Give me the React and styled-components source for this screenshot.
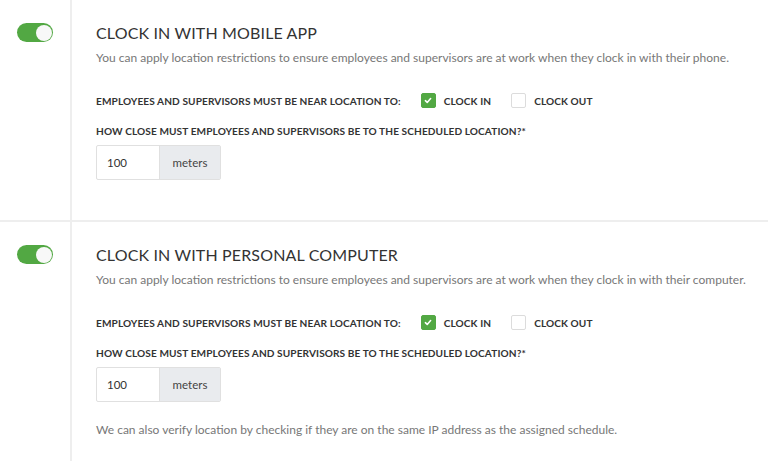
import styled, { createGlobalStyle } from "styled-components";

const Global = createGlobalStyle`
	html, body {
		margin: 0;
		padding: 0;
		background: #fff;
		font-family: Lato, "Open Sans", sans-serif;
		color: #333;
	}
`;

// --------------------------------------------------

const Page = styled.div`
	width: 768px;
	height: 461px;
	overflow: hidden;
`;

const Section = styled.section`
	display: flex;
	border-bottom: ${({ last }) => (last ? "none" : "2px solid #eeeeee")};
	height: ${({ h }) => h}px;
`;

const Side = styled.div`
	width: 72px;
	flex-shrink: 0;
	border-right: 2px solid #eeeeee;
	padding-top: 23px;
	display: flex;
	justify-content: center;
	align-items: flex-start;
	box-sizing: border-box;
`;

const Toggle = styled.div`
	width: 36px;
	height: 19px;
	border-radius: 10px;
	background: #52a843;
	position: relative;
	box-sizing: border-box;

	&:after {
		content: "";
		position: absolute;
		right: 1.5px;
		top: 1.5px;
		width: 16px;
		height: 16px;
		border-radius: 50%;
		background: #f8f8f8;
	}
`;

const Body = styled.div`
	padding: 22px 0 0 24px;
	display: flex;
	flex-direction: column;
`;

const Title = styled.h2`
	margin: 0;
	font-size: 16px;
	font-weight: 400;
	color: #333;
	line-height: 22px;
	letter-spacing: 0.15px;
`;

const Desc = styled.p`
	margin: 6px 0 0;
	font-size: 12px;
	color: #777;
	line-height: 16px;
`;

const Row = styled.div`
	display: flex;
	align-items: center;
	margin-top: 26px;
	height: 17px;
`;

const Label = styled.div`
	font-size: 10.1px;
	line-height: 12px;
	font-weight: 700;
	text-transform: uppercase;
	color: #333;
	letter-spacing: 0.1px;
	margin-right: ${({ mr }) => mr || 0}px;
`;

const Check = styled.span`
	width: 15px;
	height: 15px;
	border-radius: 2px;
	box-sizing: border-box;
	display: inline-flex;
	align-items: center;
	justify-content: center;
	margin-right: 8px;
	background: ${({ on }) => (on ? "#52a843" : "#fff")};
	border: 1px solid ${({ on }) => (on ? "#52a843" : "#dcdcdc")};
`;

const Question = styled(Label)`
	margin-top: 16px;
`;

const InputGroup = styled.div`
	display: flex;
	margin-top: 8px;
	width: 125px;
	height: 35px;
	border: 1px solid #e0e0e0;
	border-radius: 2px;
	box-sizing: border-box;
	font-size: 11.5px;
`;

const Field = styled.div`
	width: 63px;
	display: flex;
	align-items: center;
	padding-left: 10px;
	box-sizing: border-box;
	color: #333;
	border-right: 1px solid #e0e0e0;
`;

const Addon = styled.div`
	flex: 1;
	background: #e9ebee;
	display: flex;
	align-items: center;
	justify-content: center;
	color: #444;
`;

const Note = styled(Desc)`
	margin-top: 20px;
`;

// --------------------------------------------------

const Tick = () => (
	<svg width = "8" height = "7" viewBox = "0 0 9 8">
		<path d = "M1.5 4.2 L3.6 6.2 L7.5 1.8" fill = "none" stroke = "#fff" strokeWidth = "1.8" strokeLinecap = "round" strokeLinejoin = "round" />
	</svg>
);

const Block = ({ title, device, note, h, last }) => (
	<Section h = { h } last = { last }>
		<Side>
			<Toggle />
		</Side>
		<Body>
			<Title>{ title }</Title>
			<Desc>
				You can apply location restrictions to ensure employees and supervisors are at work when they clock in with their { device }.
			</Desc>
			<Row>
				<Label mr = { 20 }>Employees and supervisors must be near location to:</Label>
				<Check on><Tick /></Check>
				<Label mr = { 20 }>Clock in</Label>
				<Check />
				<Label>Clock out</Label>
			</Row>
			<Question>How close must employees and supervisors be to the scheduled location?*</Question>
			<InputGroup>
				<Field>100</Field>
				<Addon>meters</Addon>
			</InputGroup>
			{ note && <Note>{ note }</Note> }
		</Body>
	</Section>
);

export default function App() {
	return (
		<Page>
			<Global />
			<Block title = "CLOCK IN WITH MOBILE APP" device = "phone" h = { 220 } />
			<Block
				title = "CLOCK IN WITH PERSONAL COMPUTER"
				device = "computer"
				h = { 239 }
				last
				note = "We can also verify location by checking if they are on the same IP address as the assigned schedule."
			/>
		</Page>
	);
}
